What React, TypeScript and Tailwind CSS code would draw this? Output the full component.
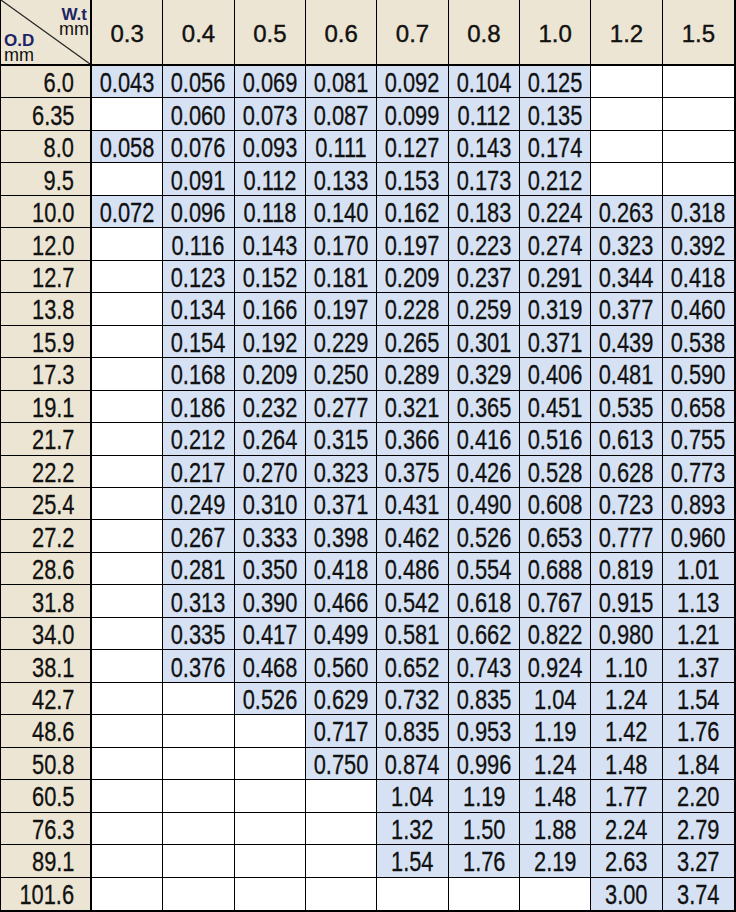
const WT = ["0.3", "0.4", "0.5", "0.6", "0.7", "0.8", "1.0", "1.2", "1.5"];

// "-" = no value (white cell)
const ROWS: [string, string][] = [
  ["6.0", "0.043 0.056 0.069 0.081 0.092 0.104 0.125 - -"],
  ["6.35", "- 0.060 0.073 0.087 0.099 0.112 0.135 - -"],
  ["8.0", "0.058 0.076 0.093 0.111 0.127 0.143 0.174 - -"],
  ["9.5", "- 0.091 0.112 0.133 0.153 0.173 0.212 - -"],
  ["10.0", "0.072 0.096 0.118 0.140 0.162 0.183 0.224 0.263 0.318"],
  ["12.0", "- 0.116 0.143 0.170 0.197 0.223 0.274 0.323 0.392"],
  ["12.7", "- 0.123 0.152 0.181 0.209 0.237 0.291 0.344 0.418"],
  ["13.8", "- 0.134 0.166 0.197 0.228 0.259 0.319 0.377 0.460"],
  ["15.9", "- 0.154 0.192 0.229 0.265 0.301 0.371 0.439 0.538"],
  ["17.3", "- 0.168 0.209 0.250 0.289 0.329 0.406 0.481 0.590"],
  ["19.1", "- 0.186 0.232 0.277 0.321 0.365 0.451 0.535 0.658"],
  ["21.7", "- 0.212 0.264 0.315 0.366 0.416 0.516 0.613 0.755"],
  ["22.2", "- 0.217 0.270 0.323 0.375 0.426 0.528 0.628 0.773"],
  ["25.4", "- 0.249 0.310 0.371 0.431 0.490 0.608 0.723 0.893"],
  ["27.2", "- 0.267 0.333 0.398 0.462 0.526 0.653 0.777 0.960"],
  ["28.6", "- 0.281 0.350 0.418 0.486 0.554 0.688 0.819 1.01"],
  ["31.8", "- 0.313 0.390 0.466 0.542 0.618 0.767 0.915 1.13"],
  ["34.0", "- 0.335 0.417 0.499 0.581 0.662 0.822 0.980 1.21"],
  ["38.1", "- 0.376 0.468 0.560 0.652 0.743 0.924 1.10 1.37"],
  ["42.7", "- - 0.526 0.629 0.732 0.835 1.04 1.24 1.54"],
  ["48.6", "- - - 0.717 0.835 0.953 1.19 1.42 1.76"],
  ["50.8", "- - - 0.750 0.874 0.996 1.24 1.48 1.84"],
  ["60.5", "- - - - 1.04 1.19 1.48 1.77 2.20"],
  ["76.3", "- - - - 1.32 1.50 1.88 2.24 2.79"],
  ["89.1", "- - - - 1.54 1.76 2.19 2.63 3.27"],
  ["101.6", "- - - - - - - 3.00 3.74"],
];

function CornerCell() {
  return (
    <div className="relative bg-[#ece5d3] border-r-2 border-b-2 border-black">
      <svg className="absolute inset-0 w-full h-full" viewBox="0 0 100 100" preserveAspectRatio="none">
        <line x1="0" y1="0" x2="100" y2="100" stroke="#222" strokeWidth="1.2" vectorEffect="non-scaling-stroke" />
      </svg>
      <div className="relative flex flex-col h-full pt-[6px] pl-[3px] pr-[1px]">
        <div className="flex flex-col items-end">
          <span className="text-[17px] leading-[17px] font-bold text-[#1d2466] mr-[2px]">W.t</span>
          <span className="text-[18px] leading-[13px] text-[#111]">mm</span>
        </div>
        <div className="flex flex-col items-start">
          <span className="text-[17px] leading-[10px] font-bold text-[#1d2466]">O.D</span>
          <span className="text-[18px] leading-[18px] text-[#111]">mm</span>
        </div>
      </div>
    </div>
  );
}

export default function App() {
  return (
    <div className="w-[736px] h-[912px] bg-white">
      <div className="grid grid-cols-[91px_repeat(9,minmax(0,1fr))] grid-rows-[66px_repeat(26,minmax(0,1fr))] w-[736px] h-[912px] border-l border-r-2 border-b-2 border-black text-[#111] font-['Liberation_Sans',sans-serif]">
        <CornerCell />
        {WT.map((w, i) => (
          <div
            key={w}
            className={
              i === WT.length - 1
                ? "flex items-center justify-center pt-[4px] bg-[#ece5d3] border-b-2 border-black text-[24px] [-webkit-text-stroke:0.4px_#111]"
                : "flex items-center justify-center pt-[4px] bg-[#ece5d3] border-r border-b-2 border-black text-[24px] [-webkit-text-stroke:0.4px_#111]"
            }
          >
            {w}
          </div>
        ))}
        {ROWS.map(([od, vals], r) => {
          const last = r === ROWS.length - 1;
          const cells = vals.split(" ");
          return [
            <div
              key={od}
              className={
                last
                  ? "flex items-center justify-end pt-[3px] pr-[16px] bg-[#ece5d3] border-r-2 border-black text-[28px] leading-none [-webkit-text-stroke:0.3px_#111]"
                  : "flex items-center justify-end pt-[3px] pr-[16px] bg-[#ece5d3] border-r-2 border-b border-black text-[28px] leading-none [-webkit-text-stroke:0.3px_#111]"
              }
            >
              <span className="inline-block origin-right scale-x-[0.78]">{od}</span>
            </div>,
            ...cells.map((v, c) => {
              const lastCol = c === cells.length - 1;
              const bg = v === "-" ? "bg-white" : "bg-[#d6e2f4]";
              const border = last
                ? lastCol
                  ? ""
                  : "border-r"
                : lastCol
                  ? "border-b"
                  : "border-r border-b";
              return (
                <div
                  key={od + c}
                  className={`flex items-center justify-center pt-[3px] border-black text-[28px] leading-none [-webkit-text-stroke:0.3px_#111] ${bg} ${border}`}
                >
                  {v === "-" ? null : <span className="inline-block scale-x-[0.78]">{v}</span>}
                </div>
              );
            }),
          ];
        })}
      </div>
    </div>
  );
}
